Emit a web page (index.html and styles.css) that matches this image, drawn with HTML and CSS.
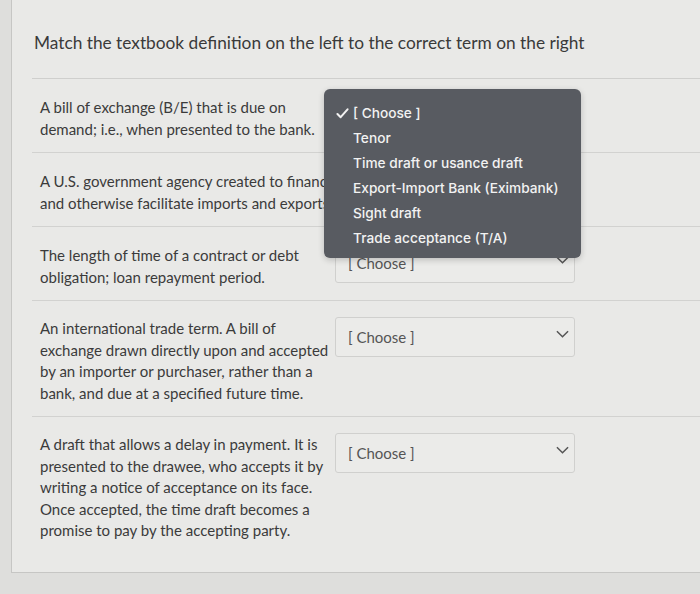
FILE: index.html
```html
<!DOCTYPE html>
<html>
<head>
<meta charset="utf-8">
<link rel="stylesheet" href="styles.css">
</head>
<body>
<div class="page">
  <div class="card">
    <div class="question">
      <div class="title">Match the textbook definition on the left to the correct term on the right</div>
      <div class="rows">
        <div class="row">
          <div class="def">A bill of exchange (B/E) that is due on demand; i.e., when presented to the bank.</div>
          <div class="pick">
            <div class="select"><span>[ Choose ]</span><svg class="chev" viewBox="0 0 14 8"><path d="M1 1 L7 7 L13 1"/></svg></div>
            <div class="menu">
              <div class="item checked"><svg class="check" viewBox="0 0 14 12"><path d="M1.5 6.5 L5 10 L12.5 1.5"/></svg>[ Choose ]</div>
              <div class="item">Tenor</div>
              <div class="item">Time draft or usance draft</div>
              <div class="item">Export-Import Bank (Eximbank)</div>
              <div class="item">Sight draft</div>
              <div class="item">Trade acceptance (T/A)</div>
            </div>
          </div>
        </div>
        <div class="row">
          <div class="def"><div class="wide">A U.S. government agency created to finance and otherwise facilitate imports and exports.</div></div>
          <div class="pick">
            <div class="select"><span>[ Choose ]</span><svg class="chev" viewBox="0 0 14 8"><path d="M1 1 L7 7 L13 1"/></svg></div>
          </div>
        </div>
        <div class="row">
          <div class="def">The length of time of a contract or debt obligation; loan repayment period.</div>
          <div class="pick">
            <div class="select"><span>[ Choose ]</span><svg class="chev" viewBox="0 0 14 8"><path d="M1 1 L7 7 L13 1"/></svg></div>
          </div>
        </div>
        <div class="row">
          <div class="def">An international trade term. A bill of exchange drawn directly upon and accepted by an importer or purchaser, rather than a bank, and due at a specified future time.</div>
          <div class="pick">
            <div class="select"><span>[ Choose ]</span><svg class="chev" viewBox="0 0 14 8"><path d="M1 1 L7 7 L13 1"/></svg></div>
          </div>
        </div>
        <div class="row last">
          <div class="def">A draft that allows a delay in payment. It is presented to the drawee, who accepts it by writing a notice of acceptance on its face. Once accepted, the time draft becomes a promise to pay by the accepting party.</div>
          <div class="pick">
            <div class="select"><span>[ Choose ]</span><svg class="chev" viewBox="0 0 14 8"><path d="M1 1 L7 7 L13 1"/></svg></div>
          </div>
        </div>
      </div>
    </div>
  </div>
</div>
</body>
</html>
```
FILE: styles.css
```css
html, body {
  margin: 0;
  padding: 0;
}
body {
  background: #dededc;
  font-family: Lato, "Liberation Sans", sans-serif;
  color: #3b3b3b;
  width: 700px;
  height: 594px;
  overflow: hidden;
}
.page {
  padding-left: 11px;
}
.card {
  background: #e9e9e7;
  border-left: 1px solid #c6c6c4;
  border-bottom: 1px solid #c6c6c4;
  height: 573px;
  box-sizing: border-box;
}
.question {
  margin-left: 20px;
}
.title {
  font-size: 17.3px;
  line-height: 24px;
  padding: 31px 0 0 2px;
  height: 47px;
  border-bottom: 1px solid #cfcfcd;
  color: #3a3a3a;
}
.rows {
  display: flex;
  flex-direction: column;
}
.row {
  display: flex;
  align-items: flex-start;
  padding: 17px 0 12px 8px;
  border-bottom: 1px solid #d2d2d0;
}
.row.last {
  border-bottom: none;
}
.def {
  width: 290px;
  flex: none;
  font-size: 15px;
  line-height: 22px;
}
.row:nth-child(4) .def,
.row:nth-child(5) .def {
  line-height: 21.5px;
}
.wide {
  width: 312px;
}
.pick {
  position: relative;
  margin-left: 5px;
  margin-top: -1px;
}
.select {
  width: 240px;
  height: 40px;
  box-sizing: border-box;
  border: 1px solid #d0d0ce;
  border-radius: 3px;
  background: #ebebe9;
  display: flex;
  align-items: center;
  justify-content: space-between;
  padding: 0 5px 0 12px;
  font-size: 15px;
  color: #555555;
}
.chev {
  width: 13px;
  height: 8px;
  margin-bottom: 6px;
  fill: none;
  stroke: #555;
  stroke-width: 1.6;
}
.menu {
  position: absolute;
  top: -6px;
  left: -11px;
  width: 257px;
  box-sizing: border-box;
  padding: 12px 0 7px 0;
  background: #585b61;
  border-radius: 6px;
  box-shadow: 0 2px 6px rgba(0, 0, 0, 0.2);
  font-family: Inter, "Open Sans", sans-serif;
  font-size: 13.7px;
  font-weight: 500;
  color: #f2f2f2;
  z-index: 10;
}
.item {
  height: 25px;
  line-height: 25px;
  padding-left: 29px;
  position: relative;
}
.check {
  position: absolute;
  left: 12px;
  top: 7px;
  width: 13px;
  height: 11px;
  fill: none;
  stroke: #f2f2f2;
  stroke-width: 2.2;
  stroke-linecap: round;
  stroke-linejoin: round;
}
```
